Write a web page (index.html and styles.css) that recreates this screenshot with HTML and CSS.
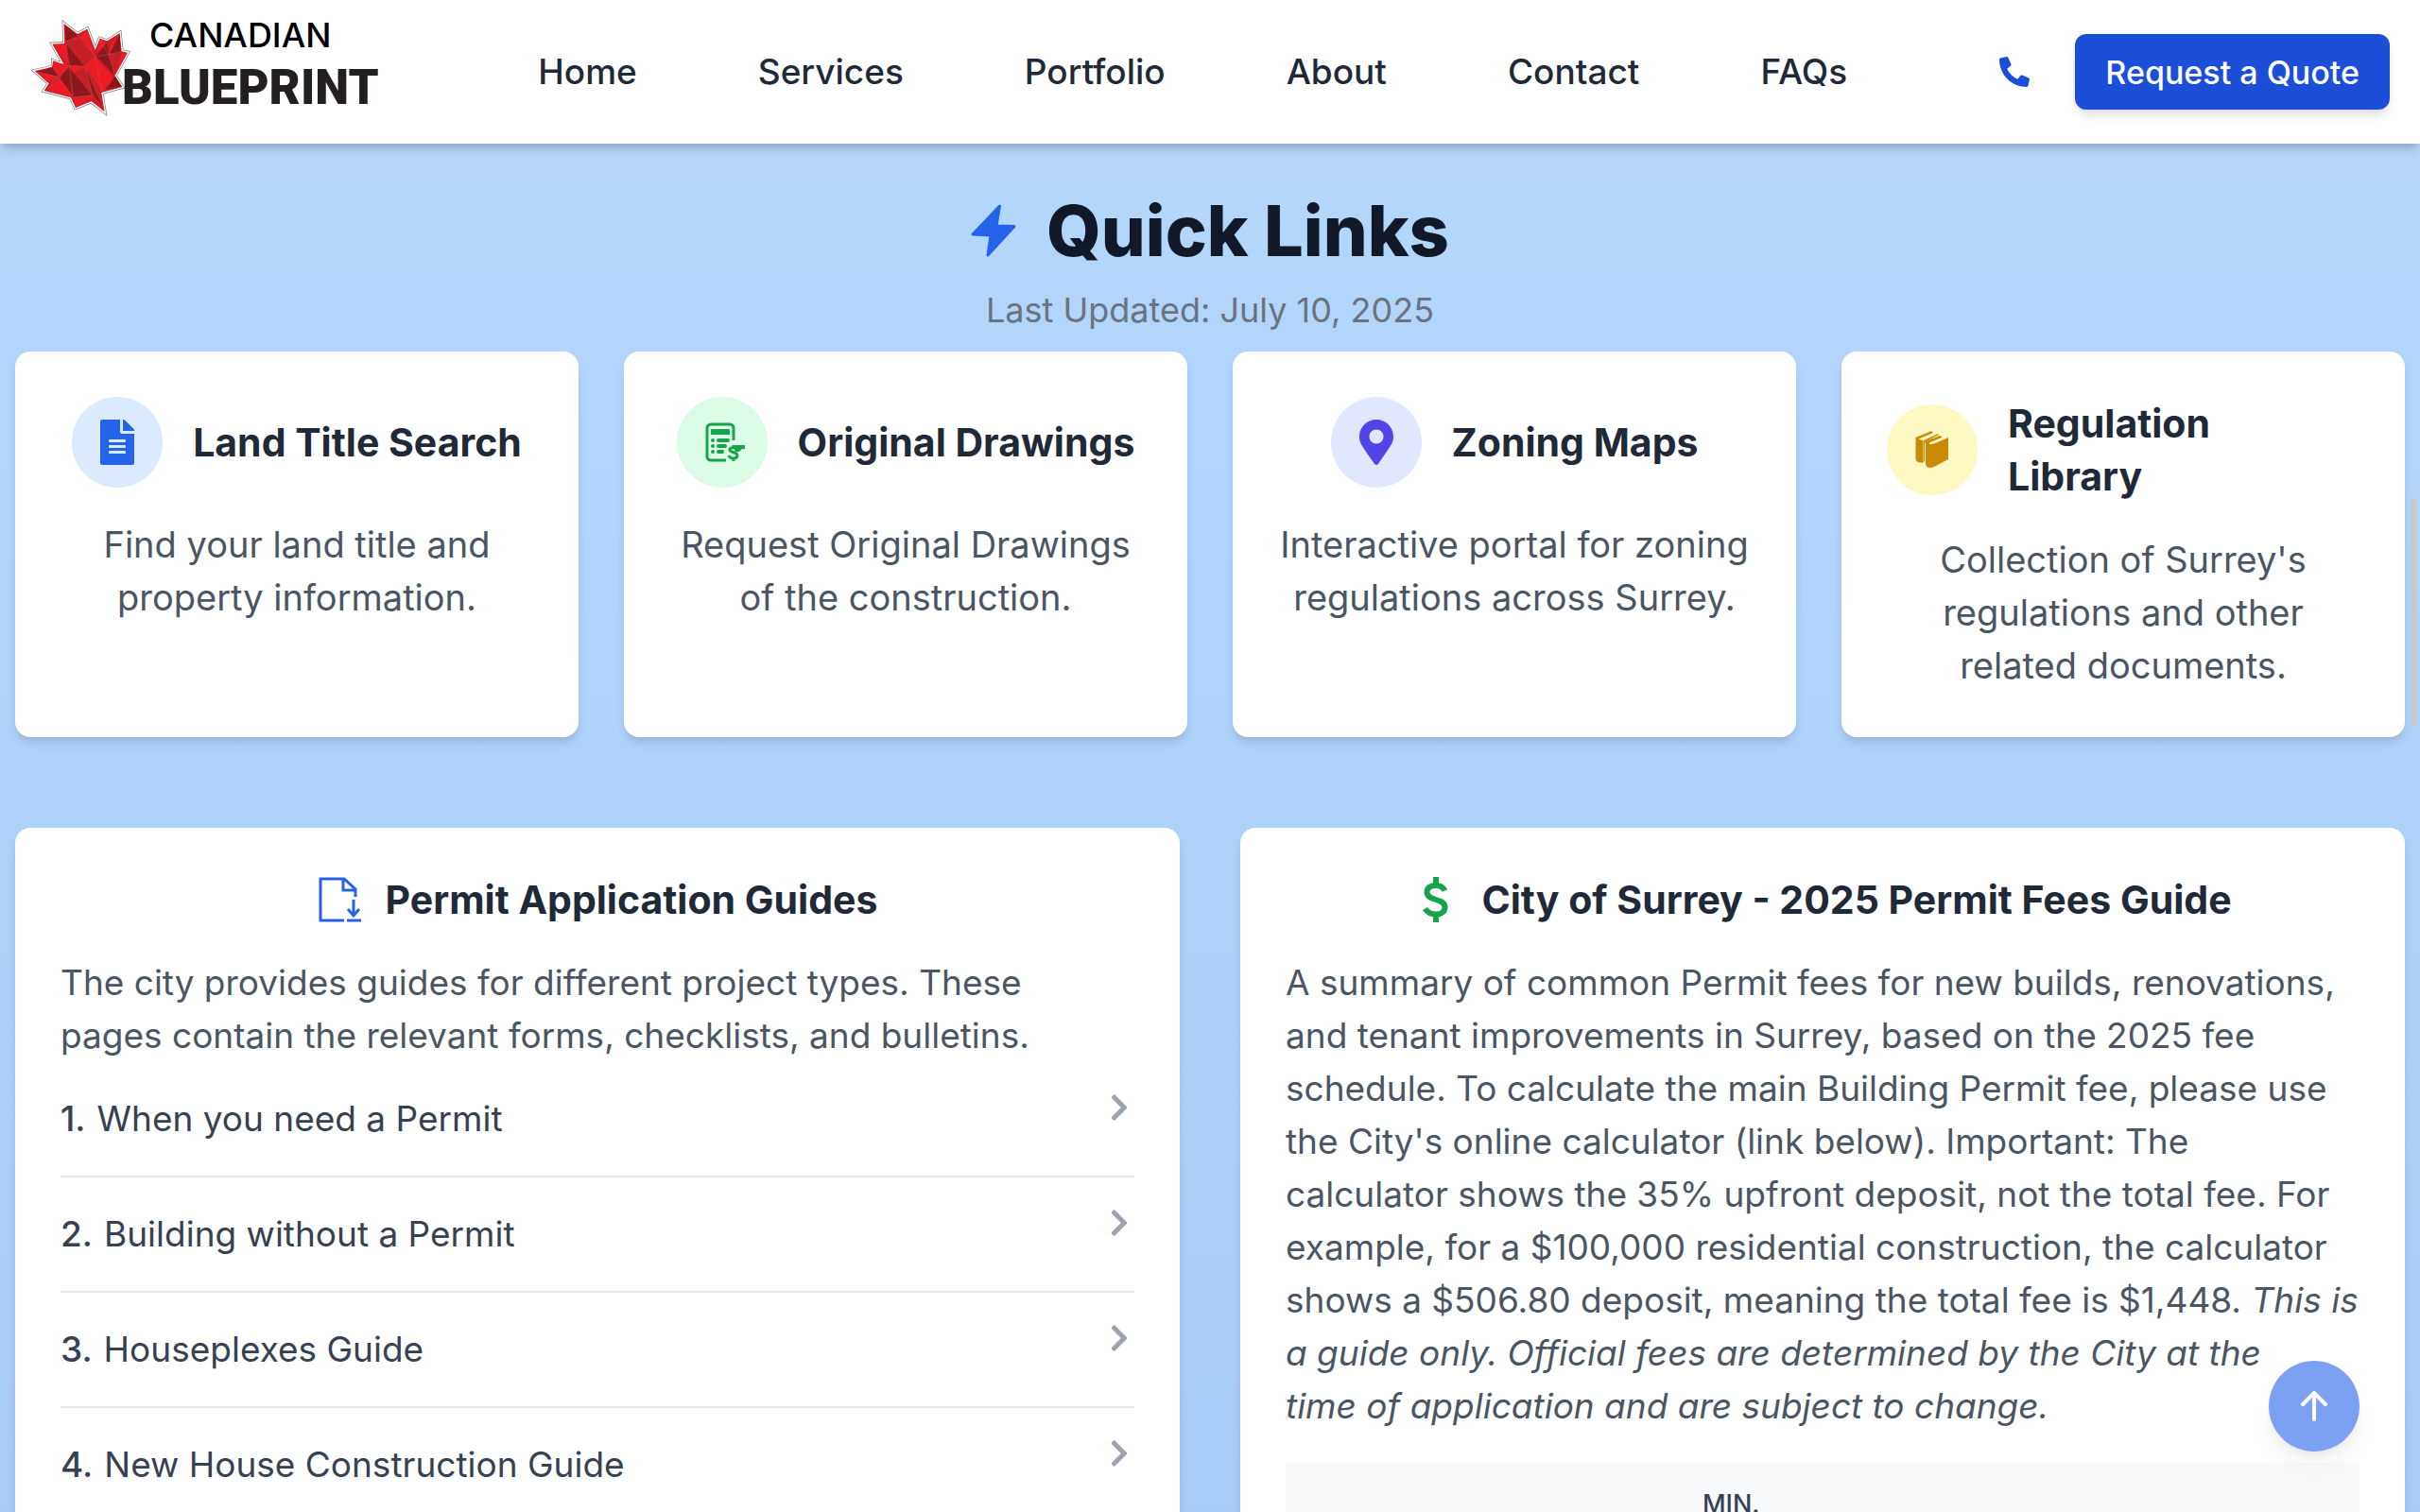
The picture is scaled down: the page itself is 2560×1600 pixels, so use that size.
FILE: index.html
```
<!DOCTYPE html>
<html lang="en">
<head>
    <meta charset="UTF-8">
    <meta name="viewport" content="width=device-width, initial-scale=1.0">
    <title>Quick Links | Canadian Blueprint</title>
    <link rel="stylesheet" href="styles.css">
</head>
<body>

<header class="site-header">
    <a href="#" class="logo" aria-label="Canadian Blueprint">
        <svg class="logo-img" viewBox="32 16 376 120">
            <g transform="scale(0.3333)">
                <path class="leaf-shadow" d="M203 75L246 108L277 92L302 158L317 122L340 130L380 105L386 163L405 167L365 240L388 276L322 294L332 355L290 322L240 342L225 310L140 288L155 265L110 225L168 212L168 193L203 205L166 140L205 138Z"/>
                <path class="leaf-edge" d="M203 75L246 108L277 92L302 158L317 122L340 130L380 105L386 163L405 167L365 240L388 276L322 294L332 355L290 322L240 342L225 310L140 288L155 265L110 225L168 212L168 193L203 205L166 140L205 138Z"/>
                <path class="leaf-mid" d="M203 75L246 108L277 92L302 158L317 122L340 130L380 105L386 163L405 167L365 240L388 276L322 294L332 355L290 322L240 342L225 310L140 288L155 265L110 225L168 212L168 193L203 205L166 140L205 138Z"/>
                <path class="leaf-bright" d="M203 75L210 132L205 138ZM277 92L255 118L302 180ZM302 180L362 250L325 292ZM302 180L325 292L270 210ZM168 140L210 142L218 207ZM168 195L220 208L185 240L165 213ZM120 228L185 245L150 262ZM150 285L190 248L232 310ZM222 210L270 212L218 240ZM295 310L232 312L240 340ZM317 125L340 135L305 170ZM345 175L380 105L352 135ZM385 170L402 168L365 240ZM292 270L332 352L300 312Z"/>
                <path class="leaf-dark" d="M207 82L246 112L210 132ZM210 140L268 210L218 207ZM218 212L290 300L232 308ZM340 135L345 175L365 240L305 178ZM380 110L383 165L348 172ZM120 228L165 213L185 243ZM190 248L218 212L228 298ZM365 242L386 274L335 284ZM270 212L330 345L294 300Z"/>
                <path class="leaf-line" d="M207 132L255 118L302 180L385 165M210 138L220 208L270 211L302 180L325 292M220 208L232 310L294 305L270 211L330 345M120 228L190 246L150 286M218 212L160 266M317 128L345 172L365 242"/>
            </g>
            <text class="logo-top" x="158" y="50">CANADIAN</text>
            <text class="logo-bottom" x="129" y="110">BLUEPRINT</text>
        </svg>
    </a>
    <nav class="main-nav">
        <a href="#">Home</a>
        <a href="#">Services</a>
        <a href="#">Portfolio</a>
        <a href="#">About</a>
        <a href="#">Contact</a>
        <a href="#">FAQs</a>
    </nav>
    <div class="header-actions">
        <a href="#" class="phone-link" aria-label="Call us">
            <svg viewBox="0 0 512 512"><path d="M497.39 361.8l-112-48a24 24 0 0 0-28 6.9l-49.6 60.6A370.66 370.66 0 0 1 130.6 204.11l60.6-49.6a23.94 23.94 0 0 0 6.9-28l-48-112A24.16 24.16 0 0 0 122.6.61l-104 24A24 24 0 0 0 0 48c0 256.5 207.9 464 464 464a24 24 0 0 0 23.4-18.6l24-104a24.29 24.29 0 0 0-14.01-27.6z"/></svg>
        </a>
        <button type="button" class="quote-btn">Request a Quote</button>
    </div>
</header>

<main>
    <h1>
        <svg class="bolt" viewBox="0 0 48 56"><path d="M30.5 2L27 23L46 23.5L18 54L21 33L2 32Z"/></svg>
        Quick Links
    </h1>
    <p class="updated">Last Updated: July 10, 2025</p>

    <section class="quick-cards">
        <a href="#" class="quick-card">
            <div class="card-head">
                <span class="badge badge-blue">
                    <svg viewBox="0 0 384 512"><path d="M224 136V0H24C10.7 0 0 10.7 0 24v464c0 13.3 10.7 24 24 24h336c13.3 0 24-10.7 24-24V160H248c-13.2 0-24-10.8-24-24zm64 236c0 6.6-5.4 12-12 12H108c-6.6 0-12-5.4-12-12v-8c0-6.6 5.4-12 12-12h168c6.6 0 12 5.4 12 12v8zm0-64c0 6.6-5.4 12-12 12H108c-6.6 0-12-5.4-12-12v-8c0-6.6 5.4-12 12-12h168c6.6 0 12 5.4 12 12v8zm0-72v8c0 6.6-5.4 12-12 12H108c-6.6 0-12-5.4-12-12v-8c0-6.6 5.4-12 12-12h168c6.6 0 12 5.4 12 12zm96-114.1v6.1H256V0h6.1c6.4 0 12.5 2.5 17 7l97.9 98c4.5 4.5 7 10.6 7 16.9z"/></svg>
                </span>
                <h2>Land Title Search</h2>
            </div>
            <p>Find your land title and<br>property information.</p>
        </a>
        <a href="#" class="quick-card">
            <div class="card-head">
                <span class="badge badge-green">
                    <svg viewBox="0 0 48 48">
                        <path class="line" d="M36 22V9a4 4 0 0 0-4-4H12a4 4 0 0 0-4 4v30a4 4 0 0 0 4 4h16"/>
                        <rect x="12" y="10" width="20" height="6" rx="1"/>
                        <circle cx="14" cy="22" r="2"/><circle cx="14" cy="28" r="2"/><circle cx="14" cy="34" r="2"/>
                        <rect x="18" y="20" width="14" height="4" rx="2"/>
                        <rect x="18" y="26" width="11" height="4" rx="2"/>
                        <rect x="18" y="32" width="8" height="4" rx="2"/>
                        <path d="M35 27H48V31H45L42 34H38Z"/>
                        <path class="line" d="M40 32C39 29 32 29 32 32C32 35 40 34 40 38C40 42 32 42 31 38M36 27V30M36 40V44"/>
                    </svg>
                </span>
                <h2>Original Drawings</h2>
            </div>
            <p>Request Original Drawings<br>of the construction.</p>
        </a>
        <a href="#" class="quick-card">
            <div class="card-head">
                <span class="badge badge-indigo">
                    <svg viewBox="0 0 384 512"><path d="M172.268 501.67C26.97 291.031 0 269.413 0 192 0 85.961 85.961 0 192 0s192 85.961 192 192c0 77.413-26.97 99.031-172.268 309.67-9.535 13.774-29.93 13.773-39.464 0zM192 272c44.183 0 80-35.817 80-80s-35.817-80-80-80-80 35.817-80 80 35.817 80 80 80z"/></svg>
                </span>
                <h2>Zoning Maps</h2>
            </div>
            <p>Interactive portal for zoning<br>regulations across Surrey.</p>
        </a>
        <a href="#" class="quick-card">
            <div class="card-head">
                <span class="badge badge-yellow">
                    <svg viewBox="0 0 48 48">
                        <path d="M6.500 11L23 4L25 6L11 12Q9 13 12 13.500L14.500 14V38L9 37Q6.500 36 6.500 34Z"/>
                        <path d="M15 14L30 7L31 8L18 14.500L16 17V36L15 37Z"/>
                        <path d="M17 16Q17 15 19 14L32 9L34 10V11L21 16.500Q20 18 23 18Q25 18 27 17L41 11V34L26 42Q17 45 17 38Z"/>
                    </svg>
                </span>
                <h2 class="two-line">Regulation<br>Library</h2>
            </div>
            <p>Collection of Surrey's<br>regulations and other<br>related documents.</p>
        </a>
    </section>

    <section class="panels">
        <article class="panel">
            <div class="panel-head">
                <svg class="icon-file" viewBox="0 0 48 48"><path d="M40 21V13L28 2H3V46H28M27 2V14H40M38 24V40M32 34L38 41L44 34M31 46H46"/></svg>
                <h2>Permit Application Guides</h2>
            </div>
            <p>The city provides guides for different project types. These<br>pages contain the relevant forms, checklists, and bulletins.</p>
            <ul class="guide-list">
                <li><a href="#"><b>1.</b><span>When you need a Permit</span><svg class="chevron" viewBox="0 0 320 512"><path d="M285.476 272.971L91.132 467.314c-9.373 9.373-24.569 9.373-33.941 0l-22.667-22.667c-9.357-9.357-9.375-24.522-.04-33.901L188.505 256 34.484 101.255c-9.335-9.379-9.317-24.544.04-33.901l22.667-22.667c9.373-9.373 24.569-9.373 33.941 0L285.475 239.03c9.373 9.372 9.373 24.568.001 33.941z"/></svg></a></li>
                <li><a href="#"><b>2.</b><span>Building without a Permit</span><svg class="chevron" viewBox="0 0 320 512"><path d="M285.476 272.971L91.132 467.314c-9.373 9.373-24.569 9.373-33.941 0l-22.667-22.667c-9.357-9.357-9.375-24.522-.04-33.901L188.505 256 34.484 101.255c-9.335-9.379-9.317-24.544.04-33.901l22.667-22.667c9.373-9.373 24.569-9.373 33.941 0L285.475 239.03c9.373 9.372 9.373 24.568.001 33.941z"/></svg></a></li>
                <li><a href="#"><b>3.</b><span>Houseplexes Guide</span><svg class="chevron" viewBox="0 0 320 512"><path d="M285.476 272.971L91.132 467.314c-9.373 9.373-24.569 9.373-33.941 0l-22.667-22.667c-9.357-9.357-9.375-24.522-.04-33.901L188.505 256 34.484 101.255c-9.335-9.379-9.317-24.544.04-33.901l22.667-22.667c9.373-9.373 24.569-9.373 33.941 0L285.475 239.03c9.373 9.372 9.373 24.568.001 33.941z"/></svg></a></li>
                <li><a href="#"><b>4.</b><span>New House Construction Guide</span><svg class="chevron" viewBox="0 0 320 512"><path d="M285.476 272.971L91.132 467.314c-9.373 9.373-24.569 9.373-33.941 0l-22.667-22.667c-9.357-9.357-9.375-24.522-.04-33.901L188.505 256 34.484 101.255c-9.335-9.379-9.317-24.544.04-33.901l22.667-22.667c9.373-9.373 24.569-9.373 33.941 0L285.475 239.03c9.373 9.372 9.373 24.568.001 33.941z"/></svg></a></li>
            </ul>
        </article>

        <article class="panel">
            <div class="panel-head">
                <svg class="icon-dollar" viewBox="0 0 48 48"><path d="M33.500 14.500C31.500 10.500 28.500 9 24 9C19 9 14.500 11 14.500 16C14.500 21 19 22.500 24 24C29 25.500 33.500 27 33.500 32C33.500 37 29 39.500 24 39.500C18.500 39.500 15 37.500 12.500 33.500M24 0V9M24 39V48"/></svg>
                <h2>City of Surrey - 2025 Permit Fees Guide</h2>
            </div>
            <p>A summary of common Permit fees for new builds, renovations,<br>and tenant improvements in Surrey, based on the 2025 fee<br>schedule. To calculate the main Building Permit fee, please use<br>the City's online calculator (link below). Important: The<br>calculator shows the 35% upfront deposit, not the total fee. For<br>example, for a $100,000 residential construction, the calculator<br>shows a $506.80 deposit, meaning the total fee is $1,448. <em>This is<br>a guide only. Official fees are determined by the City at the<br>time of application and are subject to change.</em></p>
            <table class="fees">
                <thead>
                    <tr>
                        <th class="fee-type"></th>
                        <th>Min.</th>
                        <th></th>
                    </tr>
                </thead>
            </table>
        </article>
    </section>
</main>

<button type="button" class="to-top" aria-label="Back to top">
    <svg viewBox="0 0 32 32"><path d="M16 30V2M4 14L16 2L28 14"/></svg>
</button>
<div class="scroll-thumb"></div>

</body>
</html>
```
FILE: styles.css
```
* {
    box-sizing: border-box;
}

body {
    margin: 0;
    height: 100vh;
    overflow: hidden;
    font-family: Inter, sans-serif;
    font-size: 38px;
    line-height: 56px;
    color: #4b5563;
    background: linear-gradient(180deg, #b5d8fb 0%, #a6cdf9 100%);
}

h1, h2, p, ul {
    margin: 0;
    padding: 0;
}

a {
    color: inherit;
    text-decoration: none;
}

button {
    border: none;
    font-family: inherit;
    cursor: pointer;
}

/* Header */
.site-header {
    position: relative;
    display: flex;
    align-items: center;
    justify-content: space-between;
    height: 152px;
    padding: 0 32px;
    background-color: white;
    box-shadow: 0 8px 12px -2px rgba(0, 0, 0, 0.15), 0 4px 8px -4px rgba(0, 0, 0, 0.15);
}

.logo-img {
    display: block;
    width: 376px;
    height: 120px;
    overflow: visible;
}

.leaf-shadow {
    fill: none;
    stroke: #77777c;
    stroke-width: 12;
}

.leaf-edge {
    fill: none;
    stroke: white;
    stroke-width: 8;
}

.leaf-mid {
    fill: #c52026;
}

.leaf-bright {
    fill: #ed1c24;
}

.leaf-dark {
    fill: #8b181b;
}

.leaf-line {
    fill: none;
    stroke: #d9686c;
    stroke-width: 1;
}

.logo-top {
    font: 500 36px Inter, sans-serif;
    fill: black;
}

.logo-bottom {
    font: 900 51px Roboto, sans-serif;
    fill: #231f20;
}

.main-nav {
    display: flex;
    gap: 128px;
    color: #1f2937;
    font-size: 37px;
    font-weight: 500;
}

.header-actions {
    display: flex;
    align-items: center;
    gap: 48px;
}

.phone-link svg {
    display: block;
    width: 32px;
    height: 32px;
    fill: #1d4ed8;
}

.quote-btn {
    height: 80px;
    padding: 0 32px;
    border-radius: 12px;
    background-color: #1d4ed8;
    color: white;
    font-size: 34px;
    font-weight: 500;
    box-shadow: 0 8px 12px -2px rgba(0, 0, 0, 0.1), 0 4px 8px -4px rgba(0, 0, 0, 0.1);
}

/* Title */
main {
    padding: 52px 16px 0;
}

h1 {
    display: flex;
    align-items: center;
    justify-content: center;
    gap: 32px;
    color: #111827;
    font-size: 74px;
    font-weight: 800;
    line-height: 80px;
}

.bolt {
    width: 48px;
    height: 56px;
    fill: #2563eb;
    stroke: #2563eb;
    stroke-width: 3;
    stroke-linejoin: round;
}

.updated {
    margin: 16px 0;
    text-align: center;
    color: #6b7280;
    font-size: 36px;
}

/* Quick cards */
.quick-cards {
    display: grid;
    grid-template-columns: repeat(4, 1fr);
    gap: 48px;
}

.quick-card, .panel {
    padding: 48px;
    border-radius: 16px;
    background-color: white;
    box-shadow: 0 8px 12px -2px rgba(0, 0, 0, 0.1), 0 4px 8px -4px rgba(0, 0, 0, 0.1);
}

.quick-card {
    text-align: center;
}

.card-head {
    display: flex;
    align-items: center;
    justify-content: center;
    gap: 32px;
    margin-bottom: 32px;
    text-align: left;
}

h2 {
    color: #1f2937;
    font-size: 41px;
    font-weight: 700;
    line-height: 56px;
}

.two-line {
    flex: 1;
}

.badge {
    display: flex;
    align-items: center;
    justify-content: center;
    flex-shrink: 0;
    width: 96px;
    height: 96px;
    border-radius: 50%;
}

.badge svg {
    height: 48px;
}

.badge .line {
    fill: none;
    stroke: #16a34a;
    stroke-width: 3;
}

.badge-blue {
    background-color: #dbeafe;
    fill: #2563eb;
}

.badge-green {
    background-color: #dcfce7;
    fill: #16a34a;
}

.badge-indigo {
    background-color: #e0e7ff;
    fill: #4f46e5;
}

.badge-yellow {
    background-color: #fef9c3;
    fill: #ca8a04;
}

/* Panels */
.panels {
    display: grid;
    grid-template-columns: repeat(2, minmax(0, 1fr));
    gap: 64px;
    margin-top: 96px;
}

.panel {
    font-size: 37px;
}

.panel-head {
    display: flex;
    align-items: center;
    justify-content: center;
    gap: 24px;
    margin-bottom: 32px;
}

.panel-head svg {
    width: 48px;
    height: 48px;
}

.icon-file {
    fill: none;
    stroke: #2563eb;
    stroke-width: 3;
}

.icon-dollar {
    fill: none;
    stroke: #16a34a;
    stroke-width: 6;
}

.guide-list {
    list-style: none;
}

.guide-list a {
    display: flex;
    gap: 12px;
    padding: 32px 0;
    border-bottom: 2px solid #e5e7eb;
    color: #374151;
}

.guide-list b {
    font-weight: 500;
}

.chevron {
    width: 32px;
    height: 32px;
    margin-left: auto;
    fill: #9ca3af;
}

.fees {
    width: 100%;
    margin-top: 32px;
    border-collapse: collapse;
    background-color: #f9fafb;
}

.fees th {
    padding: 24px 32px;
    vertical-align: top;
    text-align: left;
    text-transform: uppercase;
    color: #374151;
    font-size: 27px;
    font-weight: 500;
    line-height: 40px;
}

.fees .fee-type {
    width: 36%;
}

/* Floating controls */
.to-top {
    position: fixed;
    right: 64px;
    bottom: 64px;
    display: flex;
    align-items: center;
    justify-content: center;
    width: 96px;
    height: 96px;
    padding: 0;
    border-radius: 50%;
    background-color: #2563eb;
    opacity: 0.6;
    box-shadow: 0 20px 30px -6px rgba(0, 0, 0, 0.1), 0 8px 12px -4px rgba(0, 0, 0, 0.1);
}

.to-top svg {
    width: 32px;
    height: 32px;
    fill: none;
    stroke: white;
    stroke-width: 4;
    stroke-linecap: round;
    stroke-linejoin: round;
}

.scroll-thumb {
    position: fixed;
    top: 526px;
    right: 4px;
    width: 6px;
    height: 242px;
    border-radius: 3px;
    background-color: #c8c8c8;
}
```
